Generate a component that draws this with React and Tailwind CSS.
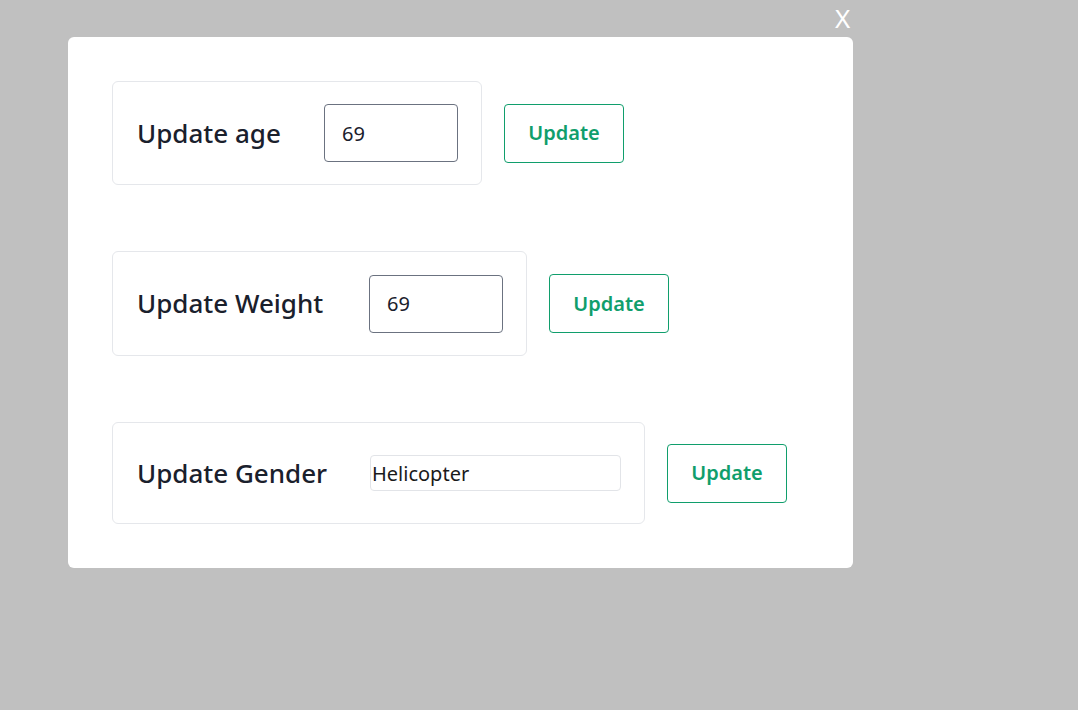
import { useState } from 'react'

function UpdateRow({ label, value, onChange, plain, width, height }) {
  return (
    <div className="flex items-center gap-[22px]">
      <div className={`flex items-center rounded-md border border-[#e5e7eb] bg-white pl-[24px] pr-[23px] ${height}`}>
        <span className={`text-[26px] font-medium text-[#1a202c] ${width}`}>{label}</span>
        {plain ? (
          <input
            value={value}
            onChange={(e) => onChange(e.target.value)}
            className="h-[36px] w-[251px] rounded-[4px] border border-[#e2e4e8] px-[1px] text-[20px] text-[#1a1a1a] outline-none"
          />
        ) : (
          <input
            value={value}
            onChange={(e) => onChange(e.target.value)}
            className="h-[58px] w-[134px] rounded-[4px] border border-[#6b7280] px-[17px] text-[20px] text-[#1a202c] outline-none"
          />
        )}
      </div>
      <button className="h-[59px] w-[120px] rounded-[4px] border border-[#109e6c] bg-white text-[20px] font-semibold text-[#109e6c]">
        Update
      </button>
    </div>
  )
}

export default function App() {
  const [age, setAge] = useState('69')
  const [weight, setWeight] = useState('69')
  const [gender, setGender] = useState('Helicopter')

  return (
    <div className="relative h-[710px] w-full bg-[#c0c0c0] font-['Noto_Sans',sans-serif]">
      <button className="absolute left-[835px] top-[2px] text-[26px] leading-[32px] text-white">X</button>
      <div className="absolute left-[68px] top-[37px] w-[785px] rounded-md bg-white px-[44px] py-[44px]">
        <div className="flex flex-col gap-[66px]">
          <UpdateRow label="Update age" value={age} onChange={setAge} width="w-[187px]" height="h-[104px]" />
          <UpdateRow label="Update Weight" value={weight} onChange={setWeight} width="w-[232px]" height="h-[105px]" />
          <UpdateRow label="Update Gender" value={gender} onChange={setGender} plain width="w-[233px]" height="h-[102px]" />
        </div>
      </div>
    </div>
  )
}
